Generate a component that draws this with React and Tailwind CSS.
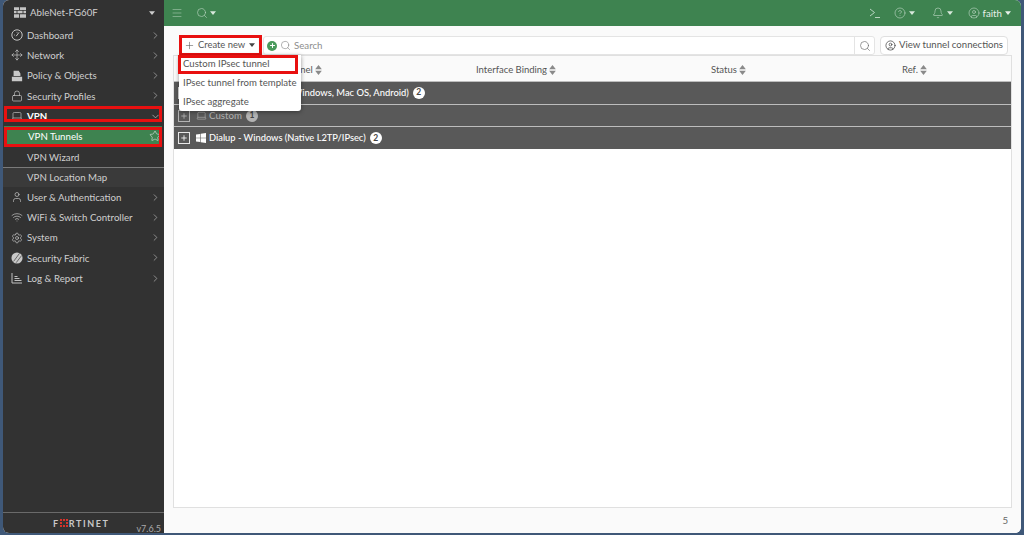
import React from "react";
import { ChevronRight, ChevronDown, Move, Lock, Laptop, Star, User, Wifi, Settings, Menu, Search, Plus, CircleHelp, Bell, CircleUser } from "lucide-react";

const Caret = ({ className = "" }) => (
  <svg viewBox="0 0 8 5" className={`w-[6px] h-[4px] shrink-0 ${className}`}><path d="M0 0h8L4 5z" fill="currentColor" /></svg>
);

const Sort = () => (
  <svg viewBox="0 0 8 12" className="w-[7px] h-[10px] ml-[2px] shrink-0"><path d="M4 0l4 5H0zM0 7h8l-4 5z" fill="#8a8a8a" /></svg>
);

const GaugeIcon = () => (
  <svg viewBox="0 0 12 12" className="w-[12px] h-[12px]" fill="none" stroke="#c4c4c4" strokeWidth="1"><circle cx="6" cy="6" r="5.2" /><path d="M5.2 7.2L8 3.4" /><path d="M3 6h1M6 2.8v1" strokeWidth="0.7" /></svg>
);

const Policy = () => (
  <svg viewBox="0 0 14 14" className="w-[12px] h-[12px]"><path d="M3 1h6l2 3v3H3zM1 8h12v5H1z" fill="#c8c8c8" /></svg>
);

const Fabric = () => (
  <svg viewBox="0 0 14 14" className="w-[12px] h-[12px]"><circle cx="7" cy="7" r="6.5" fill="#c8c8c8" /><path d="M3 11L10 1.5M6 12.5L12.5 4" stroke="#555" strokeWidth="1" /></svg>
);

const LogIcon = () => (
  <svg viewBox="0 0 12 12" className="w-[12px] h-[12px]" fill="none" stroke="#c0c0c0" strokeWidth="1"><path d="M1 1v10h10M3.5 4.5h3M3.5 6.5h5M3.5 8.5h7" /></svg>
);

const Item = ({ icon, label }) => (
  <div className="h-[20.25px] flex items-center pl-[8px] pr-[3px] text-[#cfcfcf] text-[9.7px] whitespace-nowrap">
    <span className="w-[16px] flex justify-start shrink-0">{icon}</span>
    <span className="flex-1">{label}</span>
    <ChevronRight size={11} className="text-[#b5b5b5]" strokeWidth={1.5} />
  </div>
);

const Group = ({ icon, label, count, faded, sizeClass }) => (
  <div className={`h-[22.7px] flex items-center pl-[4px] border-t border-[#bdbdbd] bg-[#595959] whitespace-nowrap ${sizeClass} ${faded ? "text-[#b3b3b3]" : "text-white font-medium"}`}>
    <span className={`w-[12px] h-[12px] mr-[6px] shrink-0 border flex items-center justify-center ${faded ? "border-[#b3b3b3]" : "border-[#e8e8e8]"}`}>
      <Plus size={8} strokeWidth={2.5} />
    </span>
    <span className="w-[13px] flex shrink-0">{icon}</span>
    <span>{label}</span>
    <span className={`ml-[4px] w-[12px] h-[12px] rounded-full flex items-center justify-center text-[8.5px] font-bold text-[#444] ${faded ? "bg-[#b3b3b3]" : "bg-white"}`}>{count}</span>
  </div>
);

const Th = ({ className, label }) => (
  <div className={`absolute top-[1px] h-[26px] flex items-center text-[9.5px] text-[#555] whitespace-nowrap ${className}`}>{label}<Sort /></div>
);

export default function App() {
  return (
    <div className="w-[1024px] h-[535px] bg-[#3f5878] overflow-hidden pl-[3px] pr-[3px] pb-[2px]" style={{ fontFamily: "Lato, 'Noto Sans', sans-serif" }}>
      <div className="w-full h-full flex bg-white text-[#444] rounded-[6px] overflow-hidden">
        <aside className="w-[161px] shrink-0 bg-[#323232] flex flex-col">
          <div className="h-[25px] flex items-center pl-[11px] pr-[9px] text-[#d0d0d0] text-[9.7px]">
            <svg viewBox="0 0 14 12" className="w-[12px] h-[11px] mr-[4px]"><path d="M0 0h6v3H0zM7 0h7v3H7zM0 4h3v3H0zM4 4h6v3H4zM11 4h3v3h-3zM0 8h6v4H0zM7 8h7v4H7z" fill="#c4c4c4" /></svg>
            <span className="flex-1">AbleNet-FG60F</span>
            <Caret className="text-[#ccc]" />
          </div>
          <div className="flex flex-col flex-1">
            <Item icon={<GaugeIcon />} label="Dashboard" />
            <Item icon={<Move size={12} strokeWidth={1.3} />} label="Network" />
            <Item icon={<Policy />} label="Policy & Objects" />
            <Item icon={<Lock size={12} strokeWidth={1.3} />} label="Security Profiles" />
            <div className="h-[20px] flex items-center pl-[8px] pr-[3px] text-white font-bold text-[9.7px] bg-[#323232] relative">
              <span className="w-[16px] flex shrink-0"><Laptop size={12} strokeWidth={1.3} className="text-[#ccc]" /></span>
              <span className="flex-1">VPN</span>
              <ChevronDown size={11} className="text-[#ccc]" strokeWidth={1.5} />
              <div className="absolute left-[1px] right-[2px] top-[0px] h-[16px] border-[3px] border-[#e81010] pointer-events-none" />
            </div>
            <div className="h-[20px] relative flex items-center pl-[24px] pr-[1px] bg-[#3e8350] text-white text-[9.7px] ml-[1px] mr-[2px]">
              <span className="flex-1">VPN Tunnels</span>
              <Star size={12} strokeWidth={1.2} className="text-[#e8e8e8]" />
              <div className="absolute left-[0px] right-[0px] top-[1px] bottom-[-1px] border-[3px] border-[#e81010] pointer-events-none" />
            </div>
            <div className="h-[20px] mt-[1px] flex items-center pl-[24px] text-[#cfcfcf] text-[9.7px] bg-[#323232]">VPN Wizard</div>
            <div className="h-[20px] border-t border-[#7a7a7a] flex items-center pl-[24px] text-[#cfcfcf] text-[9.7px] bg-[#3a3a3a]">VPN Location Map</div>
            <Item icon={<User size={12} strokeWidth={1.3} />} label="User & Authentication" />
            <Item icon={<Wifi size={12} strokeWidth={1.3} />} label="WiFi & Switch Controller" />
            <Item icon={<Settings size={12} strokeWidth={1.3} />} label="System" />
            <Item icon={<Fabric />} label="Security Fabric" />
            <Item icon={<LogIcon />} label="Log & Report" />
          </div>
          <div className="h-[21px] border-t border-[#6a6a6a] flex items-center relative">
            <span className="ml-[50px] flex items-center text-[#c8c8c8] text-[9px] font-bold tracking-[1.6px] leading-none">
              F<span className="w-[8px] h-[8px] mr-[1px] inline-block border-[2px] border-dotted border-[#d8322a]" />RTINET
            </span>
            <span className="absolute right-[3px] bottom-[-2px] text-[9px] text-[#aaa]">v7.6.5</span>
          </div>
        </aside>

        <main className="flex-1 flex flex-col min-w-0">
          <header className="h-[26px] shrink-0 bg-[#3e8350] flex items-center pl-[7px] pr-[10px] text-[#b8d4c0]">
            <Menu size={12} strokeWidth={1.3} className="text-[#9fc4a9]" />
            <Search size={12} strokeWidth={1.3} className="ml-[13px]" />
            <Caret className="ml-[2px] text-[#d8e8dc]" />
            <div className="flex-1" />
            <svg viewBox="0 0 12 12" className="w-[12px] h-[12px]" fill="none" stroke="currentColor" strokeWidth="1"><path d="M1 2l4.5 3.5L1 9M6 10.5h5" /></svg>
            <CircleHelp size={12} strokeWidth={1.3} className="ml-[13px]" />
            <Caret className="ml-[3px] text-[#d8e8dc]" />
            <Bell size={12} strokeWidth={1.3} className="ml-[17px]" />
            <Caret className="ml-[3px] text-[#d8e8dc]" />
            <CircleUser size={12} strokeWidth={1.3} className="ml-[15px]" />
            <span className="ml-[3px] text-[9.7px] text-[#e8f0ea]">faith</span>
            <Caret className="ml-[3px] text-[#e8f0ea]" />
          </header>

          <div className="flex-1 min-h-0 bg-[#fafafa] flex flex-col pl-[9px] pr-[9px]">
            <div className="h-[29px] flex items-start pt-[10px] shrink-0 relative">
              <div className="w-[77px] h-[18px] ml-[8px] flex items-center pl-[3px] bg-white text-[9.4px] text-[#555] whitespace-nowrap">
                <Plus size={11} strokeWidth={1.2} className="mr-[3px] shrink-0" />Create new<Caret className="ml-[4px] text-[#444]" />
              </div>
              <div className="absolute left-[6px] top-[9px] w-[83px] h-[21px] border-[3px] border-[#e81010]" />
              <div className="ml-[5px] w-[612px] h-[19px] bg-white border border-[#e4e4e4] rounded-[3px] flex items-center pl-[3px]">
                <span className="w-[10px] h-[10px] rounded-full bg-[#4a9a5c] flex items-center justify-center text-white shrink-0"><Plus size={7} strokeWidth={3.5} /></span>
                <Search size={11} strokeWidth={1.2} className="ml-[3px] text-[#777]" />
                <span className="ml-[3px] text-[9.7px] text-[#8d8d8d]">Search</span>
                <div className="flex-1" />
                <div className="w-[20px] h-full border-l border-[#e4e4e4] flex items-center justify-center"><Search size={12} strokeWidth={1.3} className="text-[#666]" /></div>
              </div>
              <div className="ml-[5px] w-[128px] h-[19px] bg-white border border-[#e0e0e0] rounded-[4px] flex items-center justify-center text-[9.6px] text-[#555] whitespace-nowrap">
                <CircleUser size={11} strokeWidth={1.6} className="mr-[3px] text-[#444] shrink-0" />View tunnel connections
              </div>
            </div>

            <div className="flex-1 min-h-0 border border-[#e0e0e0] bg-white flex flex-col relative">
              <div className="h-[25px] bg-[#fafafa] relative shrink-0">
                <Th className="left-[111px]" label="Tunnel" />
                <Th className="left-[302px]" label="Interface Binding" />
                <Th className="left-[537px]" label="Status" />
                <Th className="left-[728px]" label="Ref." />
              </div>
              <Group sizeClass="text-[9.4px]" icon={<Laptop size={11} strokeWidth={1.3} />} label="Dialup - FortiClient (Windows, Mac OS, Android)" count="2" />
              <Group faded sizeClass="text-[9.7px]" icon={<Laptop size={11} strokeWidth={1.3} />} label="Custom" count="1" />
              <Group sizeClass="text-[9.3px]" icon={<svg viewBox="0 0 12 12" className="w-[10px] h-[10px]"><path d="M0 1.8l5-.7v4.5H0zM5.7 1L12 0v5.6H5.7zM0 6.3h5v4.6l-5-.7zM5.7 6.3H12V12l-6.3-1z" fill="#fff" /></svg>} label="Dialup - Windows (Native L2TP/IPsec)" count="2" />
              <div className="absolute left-[5px] top-[-1px] w-[122px] bg-white rounded-b-[3px] shadow-[0_1px_4px_rgba(0,0,0,0.4)] text-[9.6px] text-[#555] z-10">
                <div className="h-[18px] flex items-center pl-[4px] relative">Custom IPsec tunnel
                  <div className="absolute left-[-1px] right-[3px] top-[0px] h-[19px] border-[3px] border-[#e81010]" />
                </div>
                <div className="h-[20px] flex items-center pl-[4px] pt-[1px] whitespace-nowrap">IPsec tunnel from template</div>
                <div className="h-[18px] flex items-center pl-[4px]">IPsec aggregate</div>
              </div>
            </div>
            <div className="h-[25px] flex items-center justify-end pr-[4px] pb-[1px] text-[9.7px] text-[#666] shrink-0">5</div>
          </div>
        </main>
      </div>
    </div>
  );
}
